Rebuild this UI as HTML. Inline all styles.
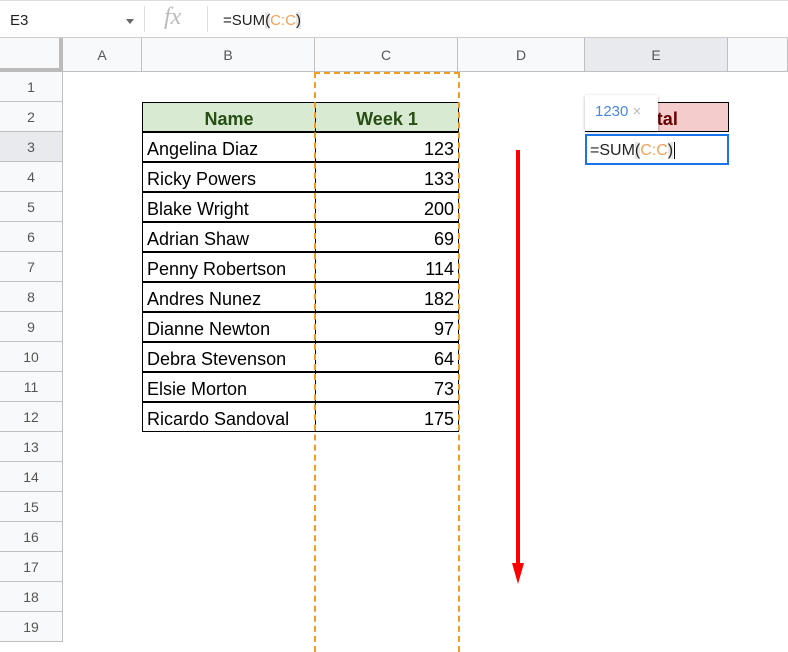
<!DOCTYPE html>
<html><head><style>
body{margin:0;width:788px;height:633px;overflow:hidden;background:#fff;font-family:"Liberation Sans",Arial,sans-serif;position:relative}
.a{position:absolute;box-sizing:border-box}
.rh{position:absolute;left:0;width:63px;height:30px;background:#f8f9fa;border-bottom:1px solid #c0c0c0;border-right:1px solid #c0c0c0;box-sizing:border-box;font-size:14px;color:#555;text-align:center;line-height:31px}
.ch{position:absolute;top:38px;height:34px;background:#f8f9fa;border-right:1px solid #c0c0c0;border-bottom:1px solid #c0c0c0;box-sizing:border-box;font-size:14px;color:#555;text-align:center;line-height:34px}
.c{position:absolute;height:30px;box-sizing:border-box;font-size:18px;line-height:32px;color:#000;padding:0 4px;border:1px solid #000}
</style></head><body>
<div class="a" style="left:0;top:0;width:788px;height:38px;border-top:1px solid #ddd;border-bottom:1px solid #ccc;background:#fff"></div>
<div class="a" style="left:10px;top:12px;font-size:15px;color:#222">E3</div>
<div class="a" style="left:126px;top:19px;width:0;height:0;border-left:4px solid transparent;border-right:4px solid transparent;border-top:5px solid #666"></div>
<div class="a" style="left:144px;top:6px;width:1px;height:26px;background:#ddd"></div>
<div class="a" style="left:164px;top:4px;font-size:24px;font-style:italic;color:#bbb;font-family:'Liberation Serif',serif">fx</div>
<div class="a" style="left:207px;top:6px;width:1px;height:26px;background:#ddd"></div>
<div class="a" style="left:223px;top:12px;font-size:15px;color:#222">=SUM<span style="background:#e8e8e8">(</span><span style="color:#f4a05a">C:C</span><span style="background:#e8e8e8">)</span></div>
<div class="a" style="left:0;top:38px;width:63px;height:34px;background:#f8f9fa;border-right:4px solid #bbb;border-bottom:4px solid #bbb"></div>
<div class="ch" style="left:63px;width:79px">A</div>
<div class="ch" style="left:142px;width:173px">B</div>
<div class="ch" style="left:315px;width:143px">C</div>
<div class="ch" style="left:458px;width:127px">D</div>
<div class="ch" style="left:585px;width:143px;background:#e8eaed">E</div>
<div class="ch" style="left:728px;width:60px"></div>
<div class="rh" style="top:72px">1</div><div class="rh" style="top:102px">2</div><div class="rh" style="top:132px;background:#e8eaed">3</div><div class="rh" style="top:162px">4</div><div class="rh" style="top:192px">5</div><div class="rh" style="top:222px">6</div><div class="rh" style="top:252px">7</div><div class="rh" style="top:282px">8</div><div class="rh" style="top:312px">9</div><div class="rh" style="top:342px">10</div><div class="rh" style="top:372px">11</div><div class="rh" style="top:402px">12</div><div class="rh" style="top:432px">13</div><div class="rh" style="top:462px">14</div><div class="rh" style="top:492px">15</div><div class="rh" style="top:522px">16</div><div class="rh" style="top:552px">17</div><div class="rh" style="top:582px">18</div><div class="rh" style="top:612px">19</div>

<div class="c" style="left:142px;top:102px;width:174px;background:#d9ead3;color:#274e13;font-weight:bold;text-align:center">Name</div>
<div class="c" style="left:315px;top:102px;width:144px;background:#d9ead3;color:#274e13;font-weight:bold;text-align:center">Week 1</div>
<div class="c" style="left:142px;top:132px;width:174px">Angelina Diaz</div><div class="c" style="left:315px;top:132px;width:144px;text-align:right">123</div>
<div class="c" style="left:142px;top:162px;width:174px">Ricky Powers</div><div class="c" style="left:315px;top:162px;width:144px;text-align:right">133</div>
<div class="c" style="left:142px;top:192px;width:174px">Blake Wright</div><div class="c" style="left:315px;top:192px;width:144px;text-align:right">200</div>
<div class="c" style="left:142px;top:222px;width:174px">Adrian Shaw</div><div class="c" style="left:315px;top:222px;width:144px;text-align:right">69</div>
<div class="c" style="left:142px;top:252px;width:174px">Penny Robertson</div><div class="c" style="left:315px;top:252px;width:144px;text-align:right">114</div>
<div class="c" style="left:142px;top:282px;width:174px">Andres Nunez</div><div class="c" style="left:315px;top:282px;width:144px;text-align:right">182</div>
<div class="c" style="left:142px;top:312px;width:174px">Dianne Newton</div><div class="c" style="left:315px;top:312px;width:144px;text-align:right">97</div>
<div class="c" style="left:142px;top:342px;width:174px">Debra Stevenson</div><div class="c" style="left:315px;top:342px;width:144px;text-align:right">64</div>
<div class="c" style="left:142px;top:372px;width:174px">Elsie Morton</div><div class="c" style="left:315px;top:372px;width:144px;text-align:right">73</div>
<div class="c" style="left:142px;top:402px;width:174px">Ricardo Sandoval</div><div class="c" style="left:315px;top:402px;width:144px;text-align:right">175</div>

<div class="a" style="left:314px;top:72px;width:146px;height:580px;border:2px dashed #f39c1f;border-bottom:none"></div>

<div class="c" style="left:585px;top:102px;width:144px;background:#f4cccc;color:#660000;font-weight:bold;text-align:center">Total</div>
<div class="a" style="left:585px;top:95px;width:73px;height:36px;background:#fff;box-shadow:0 1px 3px rgba(0,0,0,.3);font-size:15px;color:#4a86e8;line-height:33px;padding-left:10px">1230 <span style="color:#bbb">×</span></div>
<div class="a" style="left:585px;top:134px;width:144px;height:31px;border:2px solid #1a73e8;background:#fff;font-size:16px;line-height:29px;padding-left:3px;color:#222">=SUM<span style="background:#e8e8e8">(</span><span style="color:#f4a05a">C:C</span><span style="background:#e8e8e8">)</span><span style="border-left:1px solid #000;margin-left:1px"></span></div>

<div class="a" style="left:516px;top:150px;width:4px;height:418px;background:#f00"></div>
<div class="a" style="left:512px;top:563px;width:0;height:0;border-left:6px solid transparent;border-right:6px solid transparent;border-top:21px solid #f00"></div>
</body></html>
